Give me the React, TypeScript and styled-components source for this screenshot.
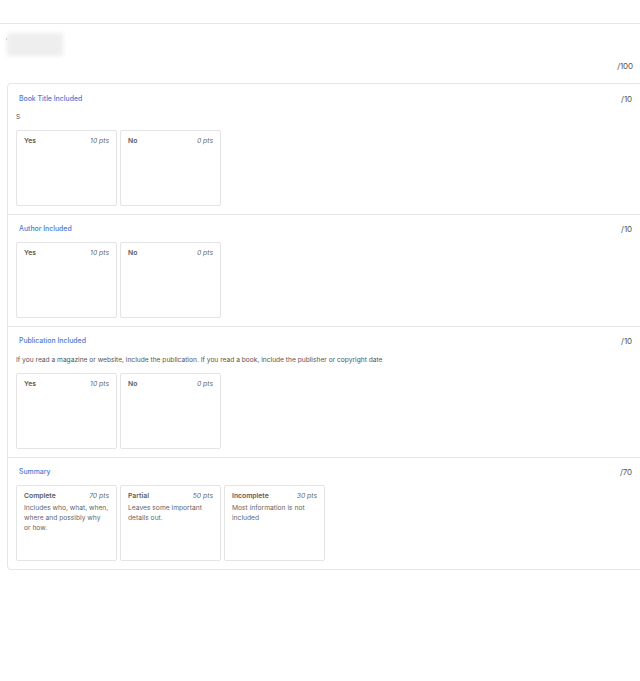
import React from "react";
import styled, { createGlobalStyle } from "styled-components";

const Global = createGlobalStyle`
  html, body { margin: 0; padding: 0; background: #fff; overflow-x: hidden; }
  body { font-family: Inter, "Open Sans", "Liberation Sans", sans-serif; color: #555; }
  * { box-sizing: border-box; }
`;

const Page = styled.div`
  width: 640px;
  min-height: 681px;
  display: flex;
  flex-direction: column;
`;

const TopBar = styled.div`
  height: 24px;
  border-bottom: 1px solid #e6e6e6;
`;

const Header = styled.div`
  padding: 9px 0 0 7px;
  height: 33px;
  position: relative;
`;

const BlurTitle = styled.div`
  width: 56px;
  height: 23px;
  background: #eeeeee;
  filter: blur(2px);
  border-radius: 2px;
`;

const Marker = styled.span`
  position: absolute;
  left: 6px;
  top: 14px;
  width: 1px;
  height: 2px;
  background: #f0b080;
`;

const TotalRow = styled.div`
  display: flex;
  justify-content: flex-end;
  padding: 0 7px 0 0;
  height: 18px;
  align-items: center;
`;

const Points = styled.span<{ $size?: number }>`
  font-size: ${(p) => p.$size ?? 8}px;
  color: #555;
  letter-spacing: -0.1px;
`;

const Card = styled.div`
  margin: 8px -4px 0 7px;
  border: 1px solid #e6e6e6;
  border-radius: 4px;
  display: flex;
  flex-direction: column;
`;

const Section = styled.div`
  padding: 8px 11px 8px 8px;
  & + & { border-top: 1px solid #e6e6e6; padding-top: 7px; }
  display: flex;
  flex-direction: column;
`;

const SectionHead = styled.div`
  display: flex;
  justify-content: space-between;
  align-items: center;
  height: 13px;
  margin-bottom: 7px;
`;

const SectionTitle = styled.span`
  font-size: 6.9px;
  font-weight: 500;
  color: #4b7bd5;
  padding-left: 3px;
`;

const Description = styled.div<{ $h: number }>`
  font-size: 6.65px;
  line-height: ${(p) => p.$h}px;
  height: ${(p) => p.$h}px;
  margin-bottom: 7px;
  color: #555;
  white-space: nowrap;
`;

const Options = styled.div`
  display: flex;
  gap: 3px;
`;

const OptionBox = styled.div`
  width: 101px;
  height: 76px;
  border: 1px solid #e4e4e4;
  border-radius: 2px;
  padding: 4px 7px 0 7px;
  display: flex;
  flex-direction: column;
  gap: 3px;
`;

const OptionHead = styled.div`
  display: flex;
  justify-content: space-between;
  align-items: center;
  height: 10px;
`;

const OptionName = styled.span`
  font-size: 6.8px;
  font-weight: 600;
  color: #5a5a5a;
`;

const OptionPts = styled.span`
  font-size: 6.8px;
  font-style: italic;
  color: #666;
`;

const OptionText = styled.div`
  font-size: 6.7px;
  line-height: 10px;
  color: #666;
  white-space: pre-line;
  margin-right: -3px;
`;

type Opt = { name: string; pts: number; text?: string };
type Crit = { title: string; max: number; desc?: string; options: Opt[] };

const yesNo: Opt[] = [
  { name: "Yes", pts: 10 },
  { name: "No", pts: 0 },
];

const criteria: Crit[] = [
  { title: "Book Title Included", max: 10, desc: "S", options: yesNo },
  { title: "Author Included", max: 10, options: yesNo },
  {
    title: "Publication Included",
    max: 10,
    desc:
      "If you read a magazine or website, include the publication. If you read a book, include the publisher or copyright date",
    options: yesNo,
  },
  {
    title: "Summary",
    max: 70,
    options: [
      { name: "Complete", pts: 70, text: "Includes who, what, when,\nwhere and possibly why\nor how." },
      { name: "Partial", pts: 50, text: "Leaves some important\ndetails out." },
      { name: "Incomplete", pts: 30, text: "Most information is not\nincluded" },
    ],
  },
];

export default function App() {
  return (
    <Page>
      <Global />
      <TopBar />
      <Header>
        <Marker />
        <BlurTitle />
      </Header>
      <TotalRow>
        <Points $size={8}>/100</Points>
      </TotalRow>
      <Card>
        {criteria.map((c, i) => (
          <Section key={c.title}>
            <SectionHead>
              <SectionTitle>{c.title}</SectionTitle>
              <Points>/{c.max}</Points>
            </SectionHead>
            {c.desc && <Description $h={i === 0 ? 11 : 12}>{c.desc}</Description>}
            <Options>
              {c.options.map((o) => (
                <OptionBox key={o.name}>
                  <OptionHead>
                    <OptionName>{o.name}</OptionName>
                    <OptionPts>{o.pts} pts</OptionPts>
                  </OptionHead>
                  {o.text && <OptionText>{o.text}</OptionText>}
                </OptionBox>
              ))}
            </Options>
          </Section>
        ))}
      </Card>
    </Page>
  );
}
